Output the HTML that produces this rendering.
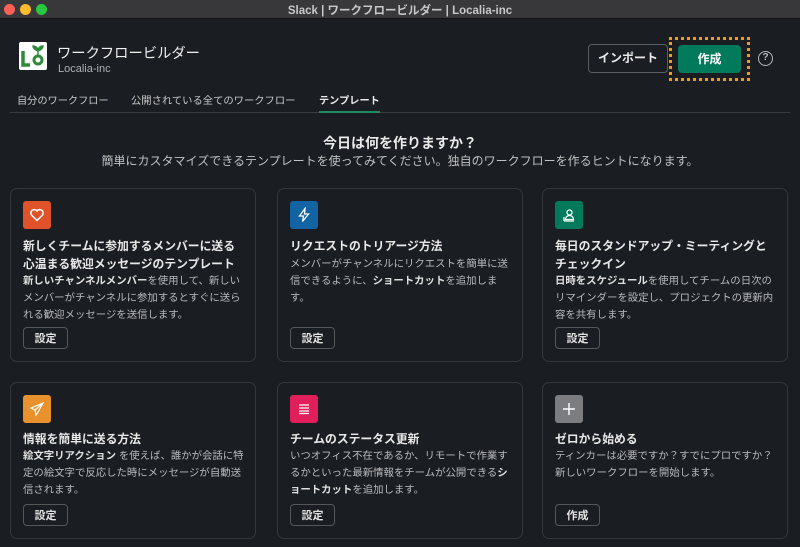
<!DOCTYPE html>
<html><head><meta charset="utf-8"><style>
*{margin:0;padding:0;box-sizing:border-box}
body{width:800px;height:547px;background:#1a1d21;font-family:"Liberation Sans","Noto Sans CJK JP",sans-serif;color:#d1d2d3;position:relative;overflow:hidden}
.a{position:absolute;white-space:nowrap}
.tb{position:absolute;left:0;top:0;width:800px;height:19px;background:#38383a;border-bottom:1px solid #111}
.dot{position:absolute;top:4px;width:11px;height:11px;border-radius:50%}
.card{position:absolute;border:1px solid #35373b;border-radius:7px;background:#1a1d21}
.ic{position:absolute;left:12px;top:12px;width:28px;height:28px;border-radius:3px;display:flex;align-items:center;justify-content:center}
.ct{position:absolute;left:12px;font-size:11.8px;font-weight:bold;color:#e8e8e8;line-height:18px;white-space:nowrap}
.cd{position:absolute;left:12px;font-size:10.4px;color:#b9babd;line-height:17px;white-space:nowrap}
.cd b{color:#e0e0e0}
.btn{position:absolute;left:12px;width:45px;height:22px;border:1px solid #55575b;border-radius:4px;font-size:11px;font-weight:bold;color:#e0e0e0;display:flex;align-items:center;justify-content:center}
</style></head><body>
<div class="tb">
<div class="dot" style="left:4px;background:#fe5f57"></div>
<div class="dot" style="left:20px;background:#febc2e"></div>
<div class="dot" style="left:36px;background:#28c840"></div>
<div class="a" style="left:0;width:800px;text-align:center;top:2px;font-size:11.5px;font-weight:bold;color:#c8c8c8">Slack | ワークフロービルダー | Localia-inc</div>
</div>
<div class="a" style="left:19px;top:42px;width:28px;height:28px;background:#fff;border-radius:2px">
<svg width="28" height="28" viewBox="0 0 28 28"><path d="M4 9v14h7" stroke="#2e8b3a" stroke-width="3.5" fill="none"/><circle cx="19" cy="18" r="4" stroke="#2e8b3a" stroke-width="3" fill="none"/><path d="M19 13v-4M19 9c-3-1-5-3-5-5 3 0 5 2 5 5zM19 9c3-1 5-3 5-5-3 0-5 2-5 5z" stroke="#2e8b3a" stroke-width="1.5" fill="#2e8b3a"/></svg>
</div>
<div class="a" style="left:57px;top:42px;font-size:14.3px;color:#f0f0f0">ワークフロービルダー</div>
<div class="a" style="left:58px;top:63px;font-size:11px;color:#b0b1b3">Localia-inc</div>
<div class="a" style="left:17px;top:92px;font-size:10.2px;color:#c8c9ca">自分のワークフロー</div>
<div class="a" style="left:131px;top:92px;font-size:10.3px;color:#c8c9ca">公開されている全てのワークフロー</div>
<div class="a" style="left:319px;top:92px;font-size:10.2px;font-weight:bold;color:#e8e8e8">テンプレート</div>
<div class="a" style="left:10px;top:112px;width:780px;height:1px;background:#3a3b3e"></div>
<div class="a" style="left:319px;top:111px;width:61px;height:2px;background:#1d8b64"></div>
<div class="a" style="left:588px;top:44px;width:80px;height:29px;border:1px solid #5a5c60;border-radius:4px;font-size:12px;font-weight:bold;color:#e8e8e8;text-align:center;line-height:27px">インポート</div>
<div class="a" style="left:669px;top:37px;width:81px;height:44px;border:3px dotted #f39c12"></div>
<div class="a" style="left:678px;top:45px;width:63px;height:28px;background:#007a5a;border-radius:4px;font-size:12px;font-weight:bold;color:#fff;text-align:center;line-height:28px">作成</div>
<div class="a" style="left:758px;top:51px;width:15px;height:15px;border:1.5px solid #b9babd;border-radius:50%;font-size:10px;font-weight:bold;color:#b9babd;text-align:center;line-height:12px">?</div>
<div class="a" style="left:0;width:800px;text-align:center;top:133px;font-size:14px;font-weight:bold;color:#eaeaea">今日は何を作りますか？</div>
<div class="a" style="left:0;width:800px;text-align:center;top:152px;font-size:12px;color:#c0c1c3">簡単にカスタマイズできるテンプレートを使ってみてください。独自のワークフローを作るヒントになります。</div>

<div class="card" style="left:10px;top:188px;width:246px;height:174px">
<div class="ic" style="background:#e0532a"><svg width="16" height="16" viewBox="0 0 16 16"><path d="M8 13.5 2.5 8A3.2 3.2 0 0 1 8 4a3.2 3.2 0 0 1 5.5 4z" fill="none" stroke="#fff" stroke-width="1.5"/></svg></div>
<div class="ct" style="top:48px">新しくチームに参加するメンバーに送る<br>心温まる歓迎メッセージのテンプレート</div>
<div class="cd" style="top:84px"><b>新しいチャンネルメンバー</b>を使用して、新しい<br>メンバーがチャンネルに参加するとすぐに送ら<br>れる歓迎メッセージを送信します。</div>
<div class="btn" style="top:138px">設定</div>
</div>
<div class="card" style="left:277px;top:188px;width:246px;height:174px">
<div class="ic" style="background:#1264a3"><svg width="16" height="16" viewBox="0 0 16 16"><path d="M9 1.5 3.5 9h4l-1 5.5L12.5 7h-4z" fill="none" stroke="#fff" stroke-width="1.3"/></svg></div>
<div class="ct" style="top:48px">リクエストのトリアージ方法</div>
<div class="cd" style="top:67px">メンバーがチャンネルにリクエストを簡単に送<br>信できるように、<b>ショートカット</b>を追加しま<br>す。</div>
<div class="btn" style="top:138px">設定</div>
</div>
<div class="card" style="left:542px;top:188px;width:246px;height:174px">
<div class="ic" style="background:#007a5a"><svg width="16" height="16" viewBox="0 0 16 16"><circle cx="8.5" cy="5.5" r="2.5" fill="none" stroke="#fff" stroke-width="1.3"/><path d="M4.5 12.5c0-2.5 2-4 4-4s4 1.5 4 4zM3 14h10M3 10v4" fill="none" stroke="#fff" stroke-width="1.3"/></svg></div>
<div class="ct" style="top:48px">毎日のスタンドアップ・ミーティングと<br>チェックイン</div>
<div class="cd" style="top:84px"><b>日時をスケジュール</b>を使用してチームの日次の<br>リマインダーを設定し、プロジェクトの更新内<br>容を共有します。</div>
<div class="btn" style="top:138px">設定</div>
</div>

<div class="card" style="left:10px;top:382px;width:246px;height:157px">
<div class="ic" style="background:#e8912d"><svg width="16" height="16" viewBox="0 0 16 16"><path d="M14 2 2 7l4 2 1 5 2-3zM6 9l8-7" fill="none" stroke="#fff" stroke-width="1.2"/></svg></div>
<div class="ct" style="top:47px">情報を簡単に送る方法</div>
<div class="cd" style="top:65px"><b>絵文字リアクション</b> を使えば、誰かが会話に特<br>定の絵文字で反応した時にメッセージが自動送<br>信されます。</div>
<div class="btn" style="top:121px">設定</div>
</div>
<div class="card" style="left:277px;top:382px;width:246px;height:157px">
<div class="ic" style="background:#e01e5a"><svg width="16" height="16" viewBox="0 0 16 16"><path d="M3 4h10M3 7h10M3 10h10M3 12.5h10" stroke="#fff" stroke-width="1.2"/></svg></div>
<div class="ct" style="top:47px">チームのステータス更新</div>
<div class="cd" style="top:65px">いつオフィス不在であるか、リモートで作業す<br>るかといった最新情報をチームが公開できる<b>シ<br>ョートカット</b>を追加します。</div>
<div class="btn" style="top:121px">設定</div>
</div>
<div class="card" style="left:542px;top:382px;width:246px;height:157px">
<div class="ic" style="background:#7c7d80"><svg width="16" height="16" viewBox="0 0 16 16"><path d="M8 2v12M2 8h12" stroke="#fff" stroke-width="1.4"/></svg></div>
<div class="ct" style="top:47px">ゼロから始める</div>
<div class="cd" style="top:65px">ティンカーは必要ですか？すでにプロですか？<br>新しいワークフローを開始します。</div>
<div class="btn" style="top:121px">作成</div>
</div>
</body></html>
